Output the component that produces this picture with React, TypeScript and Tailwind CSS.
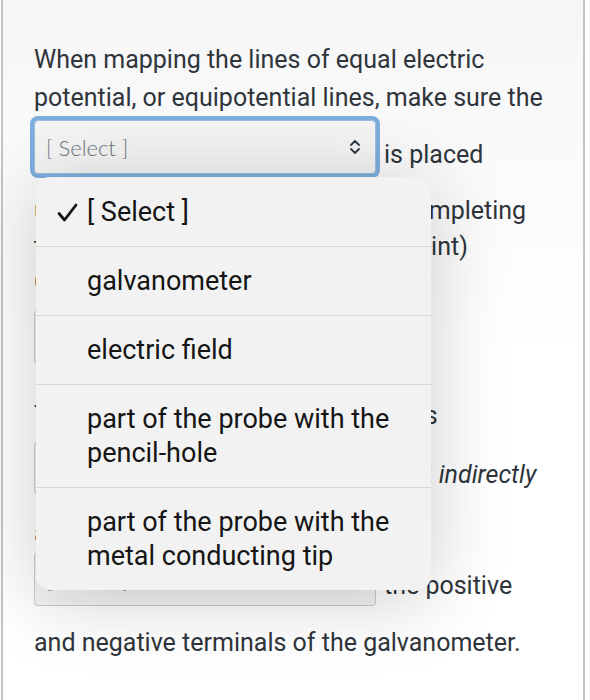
import React from "react"

const OPTIONS = [
  ["[ Select ]"],
  ["galvanometer"],
  ["electric field"],
  ["part of the probe with the", "pencil-hole"],
  ["part of the probe with the", "metal conducting tip"],
]

function Chevrons() {
  return (
    <svg width="12" height="16" viewBox="0 0 12 16" fill="none" stroke="#2d3b45" strokeWidth={1.8} strokeLinecap="round" strokeLinejoin="round">
      <path d="M2 6l4-4 4 4" />
      <path d="M2 10l4 4 4-4" />
    </svg>
  )
}

function Select({ focused = false, arrow = true }: { focused?: boolean; arrow?: boolean }) {
  return (
    <div
      className={
        "flex h-[54px] w-[342px] shrink-0 items-center justify-between rounded-[4px] border bg-[#f4f4f4] pl-[11px] pr-[14px] " +
        (focused ? "border-[#9bbfe3] ring-4 ring-[#7eaede]" : "border-[#c7cdd1]")
      }
    >
      <span className="font-['Lato'] text-[22px] font-light text-[#6b757c]">[ Select ]</span>
      {arrow && <Chevrons />}
    </div>
  )
}

function Dropdown() {
  return (
    <div className="absolute left-[33px] top-[177px] w-[395px] overflow-hidden rounded-[14px] bg-[#f2f2f2] shadow-[0_8px_80px_rgba(0,0,0,0.2)]">
      {OPTIONS.map((lines, i) => (
        <div
          key={i}
          className={
            "relative flex flex-col justify-center pl-[51px] text-[27px] leading-[34px] text-[#151515] " +
            (i > 0 ? "border-t border-[#d6d6d6] " : "") +
            (lines.length > 1 ? "h-[103px]" : "h-[69px]")
          }
        >
          {i === 0 && (
            <svg className="absolute left-[21px] top-[26px]" width="21" height="19" viewBox="0 0 21 19" fill="none" stroke="#151515" strokeWidth={2.8} strokeLinecap="round" strokeLinejoin="round">
              <path d="M2 10.5l5.5 6.5L19 2" />
            </svg>
          )}
          {lines.map((l) => (
            <span key={l}>{l}</span>
          ))}
        </div>
      ))}
    </div>
  )
}

export default function App() {
  return (
    <div className="min-h-[700px] bg-white font-['Roboto'] text-[#2f353b]">
      <div className="relative ml-[1px] min-h-[700px] w-[584px] border-x-2 border-[#c4c4c4] bg-gradient-to-b from-[#f6f6f6] via-white to-white pl-[31px] pr-[10px] pt-[41px] text-[25px]">
        <p className="leading-[38px]">
          When mapping the lines of equal electric
          <br />
          potential, or equipotential lines, make sure the
        </p>

        <div className="flex h-[60px] items-center">
          <Select focused />
          <span className="ml-[8px] mt-[16px] leading-[38px]">is placed</span>
        </div>

        <p className="mt-[16px] leading-[36px]">
          upright on the paper when you're completing
          <br />
          the whole equipotential maps. (1 point)
          <br />
          Connect the
        </p>

        <div className="mt-[9px]">
          <Select />
        </div>

        <p className="mt-[34px] leading-[36px]">The galvanometer directly measures</p>

        <div className="mt-[7px] flex items-end">
          <Select />
          <span className="mb-[2px] ml-[11px] leading-[36px]">
            it is: <i>indirectly</i>
          </span>
        </div>

        <p className="mt-[21px] leading-[36px]">and is wired across</p>

        <div className="flex items-end">
          <Select />
          <span className="mb-[2px] ml-[8px] leading-[36px]">the positive</span>
        </div>

        <p className="mt-[19px] leading-[36px]">and negative terminals of the galvanometer.</p>

        <Dropdown />
      </div>
    </div>
  )
}
